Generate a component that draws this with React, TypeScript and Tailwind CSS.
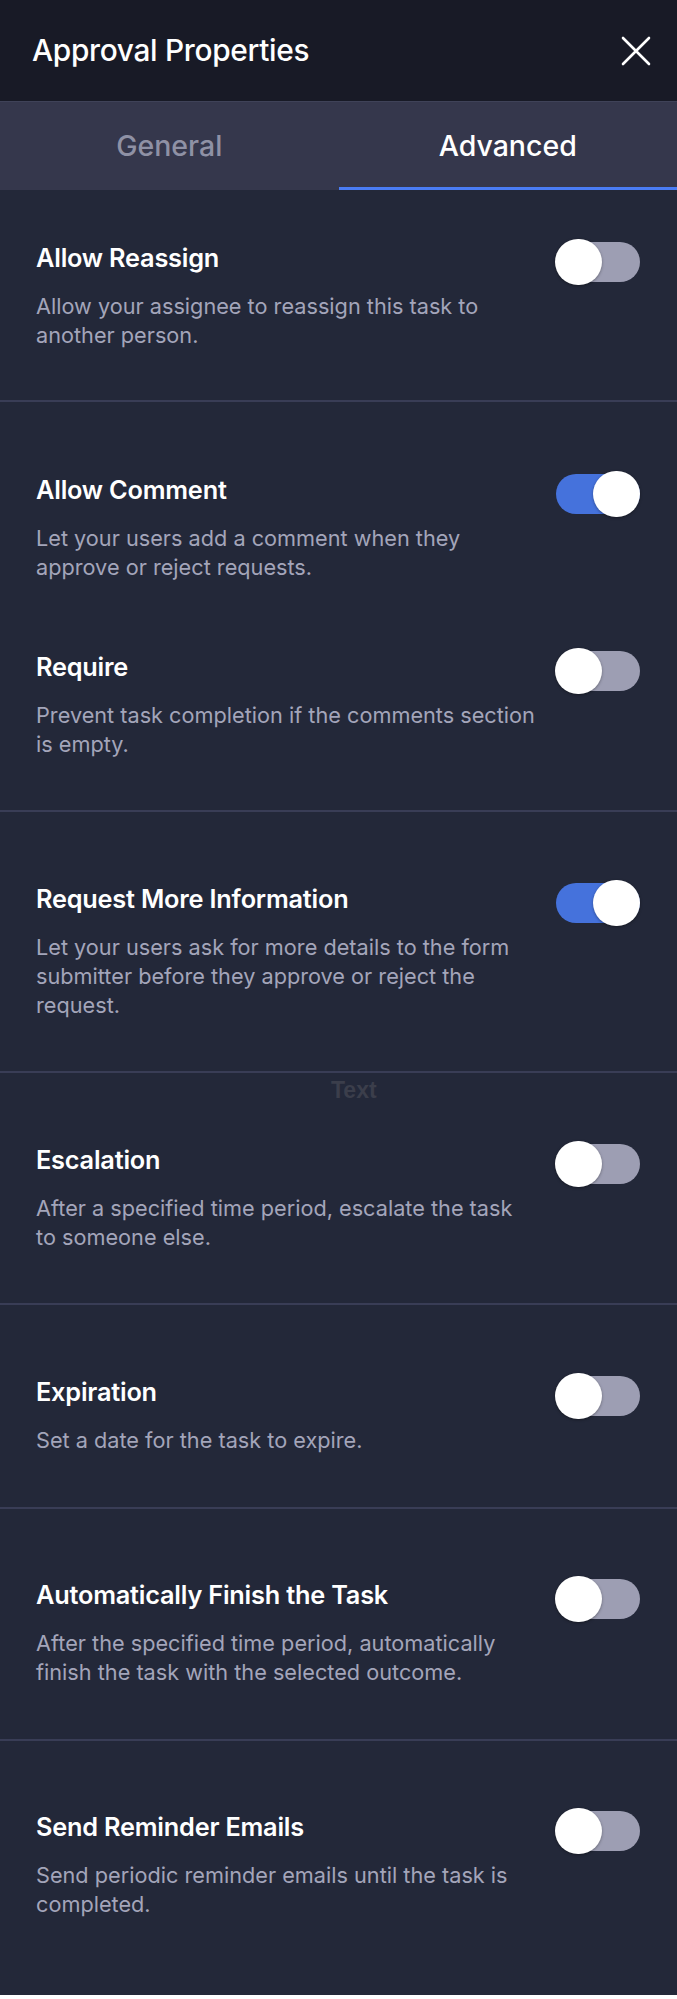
import React from 'react';

type Setting = {
  title: string;
  lines: string[];
  on: boolean;
};

const Toggle = ({ on }: { on: boolean }) => (
  <div className="relative w-[85px] h-[46px] shrink-0">
    <div
      className={
        on
          ? 'absolute left-[1px] right-0 top-[3px] h-[40px] rounded-full bg-[#4572dc]'
          : 'absolute left-[1px] right-0 top-[3px] h-[40px] rounded-full bg-[#9d9eb3]'
      }
    />
    <div
      className={
        on
          ? 'absolute right-0 top-0 w-[47px] h-[46px] rounded-full bg-white shadow-[0_1px_3px_rgba(0,0,0,0.35)]'
          : 'absolute left-0 top-0 w-[47px] h-[46px] rounded-full bg-white shadow-[0_1px_3px_rgba(0,0,0,0.35)]'
      }
    />
  </div>
);

const SettingRow = ({ title, lines, on }: Setting) => (
  <div className="flex justify-between">
    <div>
      <div className="text-[25.3px] leading-[28px] font-semibold text-white tracking-[-0.2px]">{title}</div>
      <div className="mt-[20px] text-[21.7px] leading-[29px] text-[#a3a5ba]">
        {lines.map((l) => (
          <div key={l} className="whitespace-nowrap">
            {l}
          </div>
        ))}
      </div>
    </div>
    <div className="-mt-[5px]">
      <Toggle on={on} />
    </div>
  </div>
);

const App = () => {
  return (
    <div className="w-[677px] min-h-[1999px] bg-white font-['Inter',sans-serif]">
      <div className="h-[1995px] bg-[#232839] flex flex-col">
        {/* header */}
        <div className="h-[101px] bg-[#181a26] flex items-center justify-between pl-[32px] pr-[26px]">
          <span className="text-[29.8px] font-medium text-white tracking-[-0.3px]">Approval Properties</span>
          <svg width="30" height="30" viewBox="0 0 30 30" className="mt-[1px]">
            <path d="M2 2 L28 28 M28 2 L2 28" stroke="#fff" strokeWidth="2.6" strokeLinecap="round" />
          </svg>
        </div>

        {/* tabs */}
        <div className="h-[89px] bg-[#35374c] border-t border-[#3f4258] flex">
          <div className="flex-1 flex items-center justify-center text-[28.5px] font-medium text-[#8f91a5]">
            General
          </div>
          <div className="flex-1 flex items-center justify-center text-[28.5px] font-medium text-white border-b-[3px] border-[#4a7cf4] pt-[3px]">
            Advanced
          </div>
        </div>

        <div className="pt-[54px] pb-[50px] pl-[36px] pr-[37px] border-b-2 border-[#393d56]">
          <SettingRow
            title="Allow Reassign"
            lines={['Allow your assignee to reassign this task to', 'another person.']}
            on={false}
          />
        </div>

        <div className="pt-[74px] pb-[51px] pl-[36px] pr-[37px] border-b-2 border-[#393d56] flex flex-col gap-[71px]">
          <SettingRow
            title="Allow Comment"
            lines={['Let your users add a comment when they', 'approve or reject requests.']}
            on={true}
          />
          <SettingRow
            title="Require"
            lines={['Prevent task completion if the comments section', 'is empty.']}
            on={false}
          />
        </div>

        <div className="pt-[73px] pb-[51px] pl-[36px] pr-[37px] border-b-2 border-[#393d56]">
          <SettingRow
            title="Request More Information"
            lines={[
              'Let your users ask for more details to the form',
              'submitter before they approve or reject the',
              'request.',
            ]}
            on={true}
          />
        </div>

        <div className="pt-[7px] pb-[51px] pl-[36px] pr-[37px] border-b-2 border-[#393d56]">
          <div className="pl-[295px] text-[23px] leading-[20px] font-bold text-[#3b3e4b] font-['Liberation_Sans',sans-serif]">
            Text
          </div>
          <div className="mt-[46px]">
            <SettingRow
              title="Escalation"
              lines={['After a specified time period, escalate the task', 'to someone else.']}
              on={false}
            />
          </div>
        </div>

        <div className="pt-[73px] pb-[52px] pl-[36px] pr-[37px] border-b-2 border-[#393d56]">
          <SettingRow title="Expiration" lines={['Set a date for the task to expire.']} on={false} />
        </div>

        <div className="pt-[72px] pb-[52px] pl-[36px] pr-[37px] border-b-2 border-[#393d56]">
          <SettingRow
            title="Automatically Finish the Task"
            lines={['After the specified time period, automatically', 'finish the task with the selected outcome.']}
            on={false}
          />
        </div>

        <div className="pt-[72px] pl-[36px] pr-[37px]">
          <SettingRow
            title="Send Reminder Emails"
            lines={['Send periodic reminder emails until the task is', 'completed.']}
            on={false}
          />
        </div>
      </div>
    </div>
  );
};

export default App;
